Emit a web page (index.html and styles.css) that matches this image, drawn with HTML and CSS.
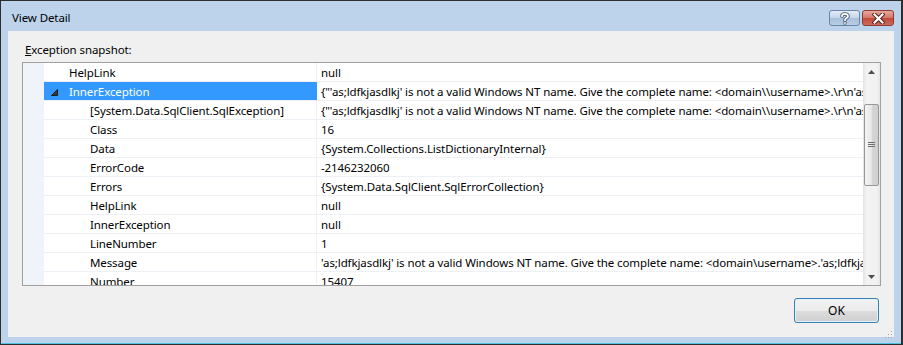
FILE: index.html
```html
<!DOCTYPE html>
<html>
<head>
<title>View Detail</title>
<meta charset="UTF-8">
<link rel="stylesheet" href="styles.css">
</head>
<body>
	<div class="window">
		<div class="titlebar">
			<span class="caption">View Detail</span>
			<div class="caption-buttons">
				<div class="cap-btn help">
					<svg width="12" height="13" viewBox="0 0 12 13">
						<path d="M3 4.3 C3 1.2 9 1.2 9 4.2 C9 6 6 6.2 6 8.2" fill="none" stroke="#4a5d75" stroke-width="3.6" stroke-linecap="round"/>
						<path d="M3 4.3 C3 1.2 9 1.2 9 4.2 C9 6 6 6.2 6 8.2" fill="none" stroke="#fff" stroke-width="1.8" stroke-linecap="round"/>
						<circle cx="6" cy="11" r="1.7" fill="#4a5d75"/>
						<circle cx="6" cy="11" r="0.9" fill="#fff"/>
					</svg>
				</div>
				<div class="cap-btn close">
					<svg width="13" height="11" viewBox="0 0 13 11">
						<path d="M2.5 1.5 L10.5 9.5 M10.5 1.5 L2.5 9.5" stroke="#4b1d18" stroke-width="4" stroke-linecap="square"/>
						<path d="M2.5 1.5 L10.5 9.5 M10.5 1.5 L2.5 9.5" stroke="#fff" stroke-width="2.2" stroke-linecap="square"/>
					</svg>
				</div>
			</div>
		</div>
		<div class="client">
			<div class="label"><u>E</u>xception snapshot:</div>
			<div class="listbox">
				<div class="gutter"></div>
				<div class="rows">
					<div class="row">
						<div class="name">HelpLink</div>
						<div class="value">null</div>
					</div>
					<div class="row">
						<div class="name expanded selected"><span class="toggle"><svg width="7" height="7" viewBox="0 0 7 7"><polygon points="6.5,0.5 6.5,6.5 0.5,6.5" fill="#3a3a3a" stroke="#1e1e1e" stroke-width="1"/></svg></span>InnerException</div>
						<div class="value">{"'as;ldfkjasdlkj' is not a valid Windows NT name. Give the complete name: &lt;domain\\username&gt;.\r\n'as;ldfkjasdlkj' is not a valid Windows NT name."}</div>
					</div>
					<div class="row">
						<div class="name child">[System.Data.SqlClient.SqlException]</div>
						<div class="value">{"'as;ldfkjasdlkj' is not a valid Windows NT name. Give the complete name: &lt;domain\\username&gt;.\r\n'as;ldfkjasdlkj' is not a valid Windows NT name."}</div>
					</div>
					<div class="row">
						<div class="name child">Class</div>
						<div class="value">16</div>
					</div>
					<div class="row">
						<div class="name child">Data</div>
						<div class="value">{System.Collections.ListDictionaryInternal}</div>
					</div>
					<div class="row">
						<div class="name child">ErrorCode</div>
						<div class="value">-2146232060</div>
					</div>
					<div class="row">
						<div class="name child">Errors</div>
						<div class="value">{System.Data.SqlClient.SqlErrorCollection}</div>
					</div>
					<div class="row">
						<div class="name child">HelpLink</div>
						<div class="value">null</div>
					</div>
					<div class="row">
						<div class="name child">InnerException</div>
						<div class="value">null</div>
					</div>
					<div class="row">
						<div class="name child">LineNumber</div>
						<div class="value">1</div>
					</div>
					<div class="row">
						<div class="name child">Message</div>
						<div class="value">'as;ldfkjasdlkj' is not a valid Windows NT name. Give the complete name: &lt;domain\username&gt;.'as;ldfkjasdlkj' is not a valid Windows NT name.</div>
					</div>
					<div class="row">
						<div class="name child">Number</div>
						<div class="value">15407</div>
					</div>
				</div>
				<div class="scrollbar">
					<div class="arrow">
						<svg width="7" height="4" viewBox="0 0 7 4"><polygon points="3.5,0 7,4 0,4" fill="#4d4d4d"/></svg>
					</div>
					<div class="track">
						<div class="thumb">
							<svg width="7" height="6" viewBox="0 0 7 6">
								<path d="M0 0.5 H7 M0 2.5 H7 M0 4.5 H7" stroke="#6e6e6e" stroke-width="1"/>
							</svg>
						</div>
					</div>
					<div class="arrow">
						<svg width="7" height="4" viewBox="0 0 7 4"><polygon points="0,0 7,0 3.5,4" fill="#4d4d4d"/></svg>
					</div>
				</div>
			</div>
			<div class="buttons">
				<button class="ok">OK</button>
			</div>
			<div class="grip">
				<svg width="9" height="9" viewBox="0 0 9 9">
					<rect x="7" y="1" width="1" height="1" fill="#a0a0a0"/>
					<rect x="4" y="4" width="1" height="1" fill="#a0a0a0"/>
					<rect x="7" y="4" width="1" height="1" fill="#a0a0a0"/>
					<rect x="1" y="7" width="1" height="1" fill="#a0a0a0"/>
					<rect x="4" y="7" width="1" height="1" fill="#a0a0a0"/>
					<rect x="7" y="7" width="1" height="1" fill="#a0a0a0"/>
				</svg>
			</div>
		</div>
	</div>
</body>
</html>
```

FILE: styles.css
```css
body {
	margin: 0;
	font-family: "Noto Sans", "DejaVu Sans", sans-serif;
	font-size: 11.5px;
	letter-spacing: -0.1px;
	color: #000;
	background: #fff;
}

.window {
	width: 903px;
	height: 345px;
	box-sizing: border-box;
	border: 1px solid #2e2e2e;
	border-right-width: 2px;
	padding: 0 7px 7px 7px;
	background: #bcd3eb;
	box-shadow: inset 0 -1px 0 #4cc3e3;
	display: flex;
	flex-direction: column;
}

/* title bar */

.titlebar {
	height: 30px;
	display: flex;
	justify-content: space-between;
	align-items: flex-start;
}

.caption {
	padding: 8px 0 0 4px;
	line-height: 18px;
	color: #000;
}

.caption-buttons {
	display: flex;
	gap: 2px;
	margin-top: 9px;
}

.cap-btn {
	height: 16px;
	box-sizing: border-box;
	border-radius: 3px;
	display: flex;
	align-items: center;
	justify-content: center;
}

.cap-btn.help {
	width: 31px;
	border: 1px solid #6b87a8;
	background: linear-gradient(#e4edf7, #c4d5e9 50%, #a9c0da 51%, #b8cce3);
}

.cap-btn.close {
	width: 32px;
	border: 1px solid #8c3b31;
	background: linear-gradient(#e8a99d, #d2766a 50%, #c0483b 51%, #cd6b5c);
}

/* client area */

.client {
	flex: 1;
	position: relative;
	background: #f0f0f0;
	padding: 10px 0 0 14px;
	display: flex;
	flex-direction: column;
}

.label {
	line-height: 18px;
	padding-left: 3px;
	margin-bottom: 3px;
}

.listbox {
	width: 859px;
	height: 224px;
	box-sizing: border-box;
	border: 1px solid #a0a0a0;
	background: #fff;
	display: flex;
}

.gutter {
	width: 21px;
	background: #eff4fa;
}

.rows {
	width: 819px;
	overflow: hidden;
}

.row {
	display: flex;
	height: 18px;
	border-bottom: 1px solid #edf0f5;
	white-space: nowrap;
}

.name {
	width: 273px;
	flex: none;
	padding: 2px 0 0 25px;
	line-height: 16px;
	box-sizing: border-box;
	border-right: 1px solid #edf0f5;
	display: flex;
	align-items: center;
	overflow: hidden;
}

.name.child {
	padding-left: 46px;
}

.name.expanded {
	padding-left: 7px;
}

.name.selected {
	background: #3399ff;
	color: #fff;
	border-right-color: #3399ff;
}

.toggle {
	width: 18px;
	height: 16px;
	display: flex;
	align-items: center;
}

.value {
	flex: 1;
	padding: 2px 0 0 4px;
	line-height: 16px;
	overflow: hidden;
}

/* scrollbar */

.scrollbar {
	width: 17px;
	background: linear-gradient(to right, #e3e3e3, #f2f2f2 20%, #f2f2f2 80%, #e6e6e6);
	display: flex;
	flex-direction: column;
}

.arrow {
	height: 17px;
	display: flex;
	align-items: center;
	justify-content: center;
}

.track {
	flex: 1;
}

.thumb {
	margin: 24px 1px 0 1px;
	height: 82px;
	box-sizing: border-box;
	border: 1px solid #979797;
	border-radius: 2px;
	background: linear-gradient(to right, #f5f5f5, #e6e6e6 50%, #d6d6d6 51%, #cfcfcf);
	display: flex;
	align-items: center;
	justify-content: center;
}

/* buttons */

.buttons {
	display: flex;
	justify-content: flex-end;
	padding-right: 15px;
	margin-top: 12px;
}

.ok {
	width: 85px;
	height: 25px;
	font-family: inherit;
	font-size: 12px;
	color: #000;
	border: 1px solid #3c7fb1;
	border-radius: 3px;
	background: linear-gradient(#f2f2f2, #ebebeb 50%, #dddddd 51%, #cfcfcf);
	box-shadow: inset 0 0 0 1px #dff3fd;
	padding: 0;
}

.grip {
	position: absolute;
	right: 1px;
	bottom: 1px;
	width: 9px;
	height: 9px;
}
```
